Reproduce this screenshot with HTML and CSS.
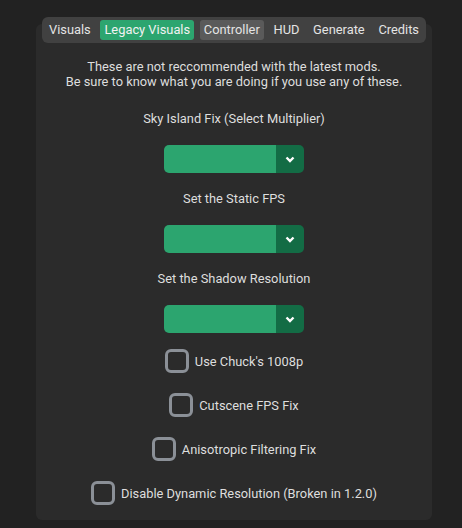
FILE: index.html
```html
<!DOCTYPE html>
<html>
<head>
<meta charset="utf-8">
<link rel="stylesheet" href="styles.css">
</head>
<body>
<div class="panel">
  <nav class="tabs">
    <span class="tab">Visuals</span>
    <span class="tab active">Legacy Visuals</span>
    <span class="tab hover">Controller</span>
    <span class="tab">HUD</span>
    <span class="tab">Generate</span>
    <span class="tab">Credits</span>
  </nav>
  <p class="warn">These are not reccommended with the latest mods.<br>Be sure to know what you are doing if you use any of these.</p>

  <div class="group first">
    <div class="label">Sky Island Fix (Select Multiplier)</div>
    <div class="select"><span class="field"></span><span class="btn"><svg width="10" height="7" viewBox="0 0 10 7"><polyline points="1.5,1.5 5,5 8.5,1.5" fill="none" stroke="#fff" stroke-width="2.4"/></svg></span></div>
  </div>
  <div class="group">
    <div class="label">Set the Static FPS</div>
    <div class="select"><span class="field"></span><span class="btn"><svg width="10" height="7" viewBox="0 0 10 7"><polyline points="1.5,1.5 5,5 8.5,1.5" fill="none" stroke="#fff" stroke-width="2.4"/></svg></span></div>
  </div>
  <div class="group">
    <div class="label">Set the Shadow Resolution</div>
    <div class="select"><span class="field"></span><span class="btn"><svg width="10" height="7" viewBox="0 0 10 7"><polyline points="1.5,1.5 5,5 8.5,1.5" fill="none" stroke="#fff" stroke-width="2.4"/></svg></span></div>
  </div>

  <div class="checks">
    <label class="check"><span class="box"></span><span>Use Chuck's 1008p</span></label>
    <label class="check"><span class="box"></span><span>Cutscene FPS Fix</span></label>
    <label class="check"><span class="box"></span><span>Anisotropic Filtering Fix</span></label>
    <label class="check"><span class="box"></span><span>Disable Dynamic Resolution (Broken in 1.2.0)</span></label>
  </div>
</div>
</body>
</html>
```
FILE: styles.css
```css
html, body {
  margin: 0;
  padding: 0;
  background: #222222;
}
body {
  font-family: Roboto, "Liberation Sans", sans-serif;
  font-size: 12.85px;
  color: #dedede;
  padding-top: 24px;
}
.panel {
  margin-left: 36px;
  width: 396px;
  height: 496px;
  background: #2b2b2b;
  border-radius: 6px;
  box-sizing: border-box;
  display: flex;
  flex-direction: column;
  align-items: center;
}
.tabs {
  margin-top: -7px;
  width: 384px;
  height: 26px;
  box-sizing: border-box;
  background: #414141;
  border-radius: 6px;
  display: flex;
  align-items: center;
  padding: 0 3px;
  justify-content: space-between;
}
.tab {
  height: 20px;
  line-height: 20px;
  padding: 0 4px;
  border-radius: 3px;
  color: #e4e4e4;
}
.tab.active {
  background: #2ca56f;
  color: #f2f2f2;
}
.tab.hover {
  background: #5a5a5a;
}
.warn {
  margin: 16px 0 0;
  line-height: 15px;
  text-align: center;
}
.group {
  display: flex;
  flex-direction: column;
  align-items: center;
  margin-top: 18px;
}
.group.first {
  margin-top: 22px;
}
.label {
  line-height: 15px;
}
.select {
  margin-top: 19px;
  width: 140px;
  height: 28px;
  display: flex;
  border-radius: 5px;
  overflow: hidden;
}
.field {
  flex: 1;
  background: #2ca56f;
}
.btn {
  width: 28px;
  background: #136c45;
  display: flex;
  align-items: center;
  justify-content: center;
}
.btn svg {
  display: block;
}
.checks {
  margin-top: 16px;
  display: flex;
  flex-direction: column;
  align-items: center;
  gap: 20px;
}
.check {
  display: flex;
  align-items: center;
  gap: 6px;
  height: 24px;
}
.box {
  width: 24px;
  height: 24px;
  box-sizing: border-box;
  border: 3px solid #8b9097;
  border-radius: 6px;
}
```
